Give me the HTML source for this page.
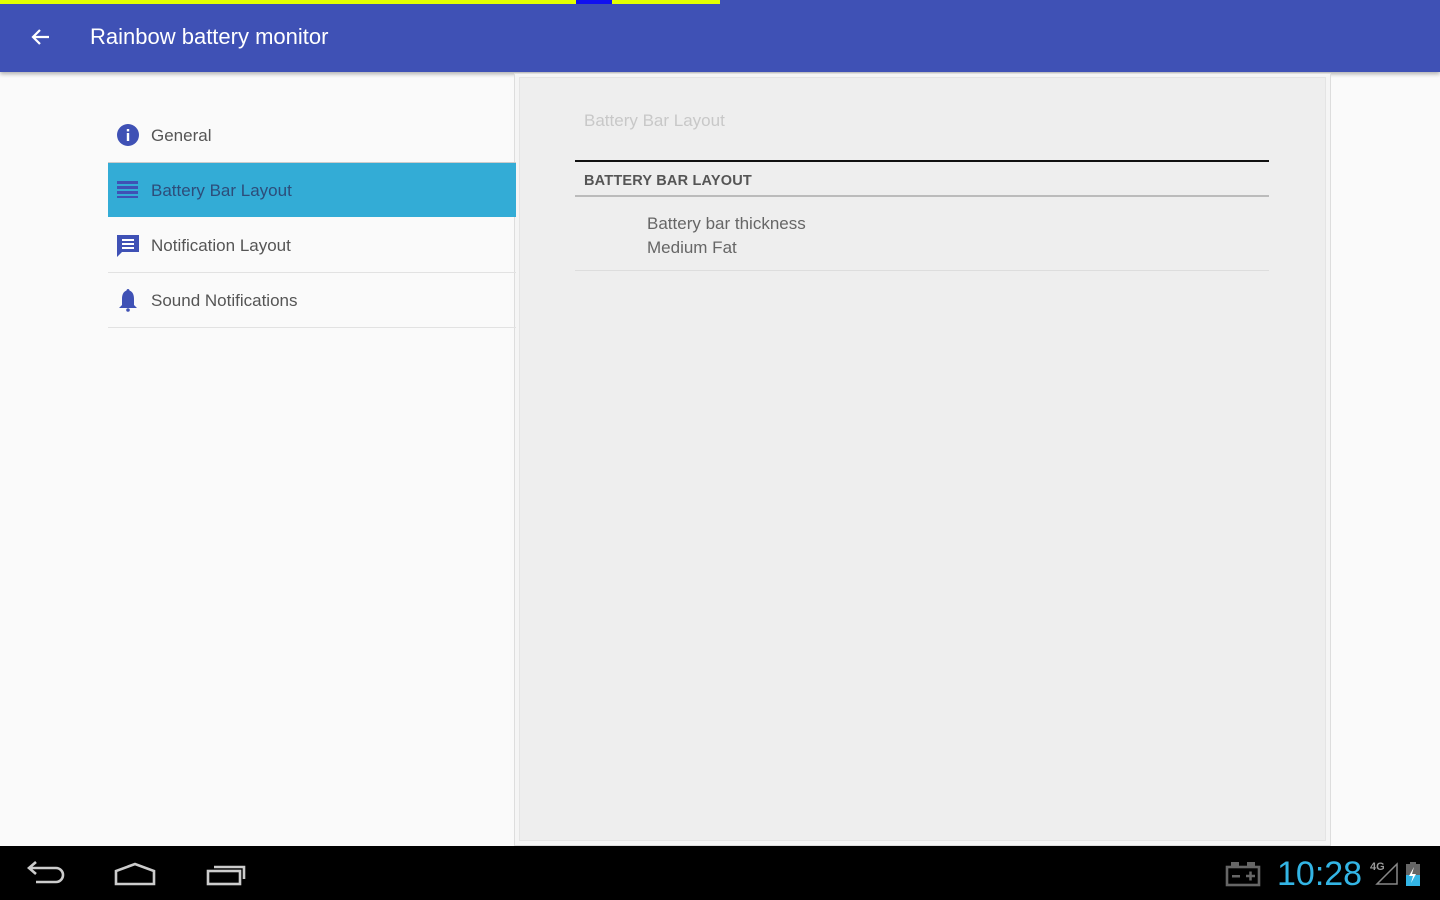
<!DOCTYPE html>
<html><head><meta charset="utf-8"><style>
*{margin:0;padding:0;box-sizing:border-box}
body{width:1440px;height:900px;overflow:hidden;background:#fafafa;font-family:"Liberation Sans",sans-serif;position:relative}
.abs{position:absolute}
.t{font-size:17px;color:#555;}
</style></head><body>
<div class="abs" style="left:0;top:0;width:1440px;height:72px;background:#3f51b5;box-shadow:0 2px 4px rgba(0,0,0,.3)"></div>
<div class="abs" style="left:0;top:0;width:720px;height:4px;background:#e3ff00"></div>
<div class="abs" style="left:576px;top:0;width:36px;height:4px;background:#1010f0"></div>
<svg class="abs" style="left:29px;top:25px" width="24" height="24" viewBox="0 0 24 24"><path d="M20 12H5M11 5l-7 7 7 7" stroke="#fff" stroke-width="2.2" fill="none"/></svg>
<div class="abs" style="left:90px;top:24px;font-size:22px;color:#fff">Rainbow battery monitor</div>

<div class="abs" style="left:514px;top:73px;width:817px;height:773px;background:#f5f5f5;border:1px solid #ddd"></div>
<div class="abs" style="left:519px;top:77px;width:807px;height:764px;background:#eeeeee;border:1px solid #e4e4e4"></div>
<div class="abs" style="left:584px;top:111px;font-size:17px;color:#c8c8c8">Battery Bar Layout</div>
<div class="abs" style="left:575px;top:160px;width:694px;height:2px;background:#111"></div>
<div class="abs" style="left:584px;top:173px;font-size:14.5px;color:#555;font-weight:bold;letter-spacing:.2px">BATTERY BAR LAYOUT</div>
<div class="abs" style="left:575px;top:195px;width:694px;height:2px;background:#bbb"></div>
<div class="abs t" style="left:647px;top:214px;color:#666">Battery bar thickness</div>
<div class="abs t" style="left:647px;top:238px;color:#666">Medium Fat</div>
<div class="abs" style="left:575px;top:270px;width:694px;height:1px;background:#ddd"></div>

<svg class="abs" style="left:116px;top:123px" width="24" height="24" viewBox="0 0 24 24"><circle cx="12" cy="12" r="11" fill="#3f51b5"/><rect x="10.8" y="10" width="2.4" height="8" fill="#fff"/><rect x="10.8" y="6" width="2.4" height="2.4" fill="#fff"/></svg>
<div class="abs t" style="left:151px;top:126px">General</div>
<div class="abs" style="left:108px;top:162px;width:408px;height:55px;background:#33acd6;border-top:1px solid #ccc"></div>
<svg class="abs" style="left:117px;top:180px" width="22" height="20" viewBox="0 0 22 20"><g fill="#3f51b5"><rect y="1" width="21" height="3"/><rect y="6" width="21" height="3"/><rect y="11" width="21" height="3"/><rect y="16" width="21" height="2"/></g></svg>
<div class="abs t" style="left:151px;top:181px;color:#2d4d7a">Battery Bar Layout</div>
<svg class="abs" style="left:116px;top:234px" width="24" height="24" viewBox="0 0 24 24"><path d="M1 1h22v17H6l-5 5z" fill="#3f51b5"/><g fill="#fff"><rect x="6" y="5" width="12" height="2"/><rect x="6" y="9" width="12" height="2"/><rect x="6" y="13" width="12" height="2"/></g></svg>
<div class="abs t" style="left:151px;top:236px">Notification Layout</div>
<div class="abs" style="left:108px;top:272px;width:408px;height:1px;background:#e2e2e2"></div>
<svg class="abs" style="left:116px;top:288px" width="24" height="24" viewBox="0 0 24 24"><path d="M12 1c1 0 1.5.8 1.5 1.5C17 4 18 7 18 11v6l3 3H3l3-3v-6c0-4 1-7 4.5-8.5C10.5 1.8 11 1 12 1z" fill="#3f51b5"/><circle cx="12" cy="22" r="1.8" fill="#3f51b5"/></svg>
<div class="abs t" style="left:151px;top:291px">Sound Notifications</div>
<div class="abs" style="left:108px;top:327px;width:408px;height:1px;background:#e2e2e2"></div>

<div class="abs" style="left:0;top:846px;width:1440px;height:54px;background:#000"></div>
<svg class="abs" style="left:24px;top:860px" width="42" height="28" viewBox="0 0 42 28"><path d="M6 8h26a7 7 0 0 1 0 14H12M12 2L5 8l7 6" stroke="#ccc" stroke-width="2.6" fill="none"/></svg>
<svg class="abs" style="left:112px;top:860px" width="46" height="28" viewBox="0 0 46 28"><path d="M4 24V11L23 4l19 7v13z" stroke="#ccc" stroke-width="2.6" fill="none"/></svg>
<svg class="abs" style="left:204px;top:860px" width="44" height="28" viewBox="0 0 44 28"><rect x="4" y="11" width="32" height="13" stroke="#ccc" stroke-width="2.6" fill="none"/><path d="M10 7h30v12" stroke="#ccc" stroke-width="2.6" fill="none"/></svg>
<svg class="abs" style="left:1225px;top:860px" width="36" height="28" viewBox="0 0 36 28"><rect x="2" y="7" width="32" height="18" stroke="#666" stroke-width="2.6" fill="none"/><rect x="6" y="2" width="8" height="5" fill="#666"/><rect x="22" y="2" width="8" height="5" fill="#666"/><rect x="7" y="15" width="8" height="2.5" fill="#666"/><path d="M21 16h9M25.5 11.5v9" stroke="#666" stroke-width="2.5"/></svg>
<div class="abs" style="left:1277px;top:855px;font-size:34px;color:#33b5e5">10:28</div>
<div class="abs" style="left:1370px;top:861px;font-size:11px;color:#999;font-weight:bold">4G</div>
<svg class="abs" style="left:1375px;top:862px" width="24" height="24" viewBox="0 0 24 24"><path d="M22 2L2 22h20z" stroke="#888" stroke-width="1.5" fill="none"/></svg>
<svg class="abs" style="left:1404px;top:861px" width="18" height="26" viewBox="0 0 18 26"><rect x="6" y="1" width="6" height="3" fill="#666"/><rect x="2" y="3" width="14" height="11" fill="#666"/><rect x="2" y="14" width="14" height="11" fill="#33b5e5"/><path d="M10 6l-5 9h4l-2 7 5-9H8z" fill="#fff"/></svg>
</body></html>
